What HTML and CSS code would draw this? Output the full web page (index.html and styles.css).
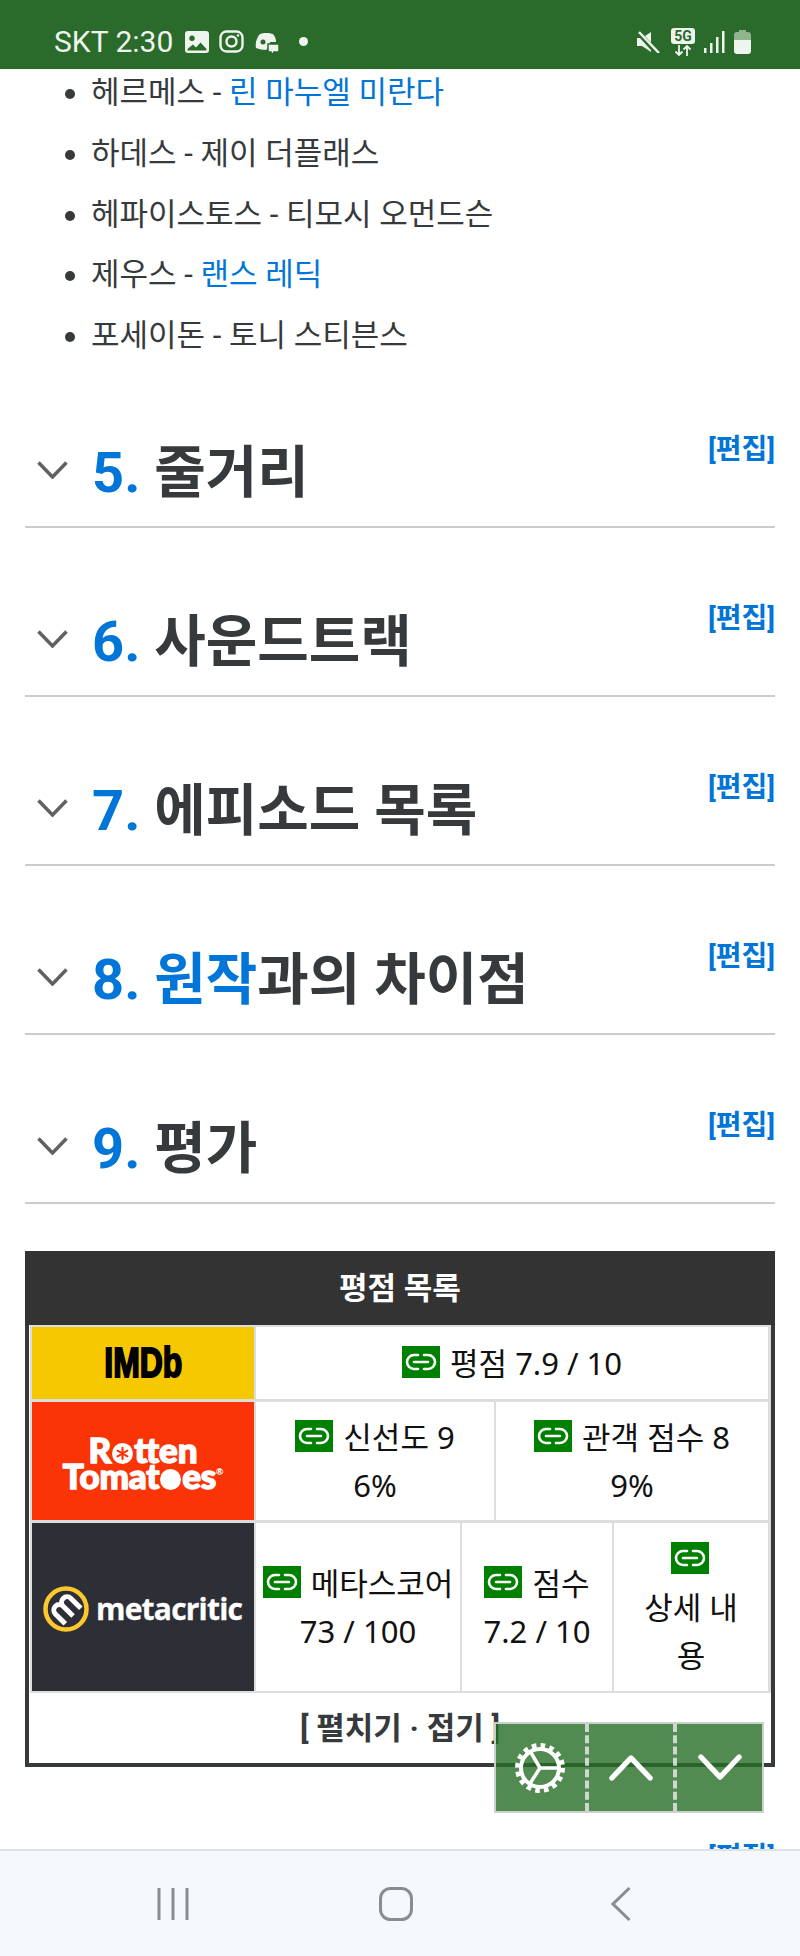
FILE: index.html
```html
<!DOCTYPE html>
<html lang="ko">
<head>
<meta charset="utf-8">
<title>평점 목록</title>
<link rel="stylesheet" href="styles.css">
</head>
<body>
<div class="phone">
  <header class="status">
    <span class="status-text">SKT 2:30</span>
    <svg class="si si-gallery" viewBox="0 0 24 22"><path fill="#eef4ee" fill-rule="evenodd" d="M3 0h18a3 3 0 0 1 3 3v16a3 3 0 0 1-3 3H3a3 3 0 0 1-3-3V3a3 3 0 0 1 3-3zM2.500 18v1a.5.5 0 0 0 .5.500h18a.5.5 0 0 0 .5-.5v-1l-6-6.500-4.500 5-3-3zM7 4.500a2.800 2.800 0 1 0 .01 0z"/></svg>
    <svg class="si si-insta" viewBox="0 0 25 23"><rect x="1.500" y="1.500" width="22" height="20" rx="6" fill="none" stroke="#eef4ee" stroke-width="2.400"/><circle cx="12.500" cy="11.500" r="5" fill="none" stroke="#eef4ee" stroke-width="2.400"/><circle cx="19" cy="5.500" r="1.300" fill="#eef4ee"/></svg>
    <svg class="si si-discord" viewBox="0 0 26 23"><path fill="#eef4ee" d="M6 2c3-1.500 10-1.500 13 0 2 2 3 5 3 8h-6v5l-2 1-2 2c-3 0-7-1-10-2-1-5 1-11 4-14z"/><circle cx="9" cy="10" r="2.500" fill="#2a6a2a"/><path fill="#eef4ee" stroke="#2a6a2a" stroke-width="1.500" d="M14 12h11v8h-5l-2 3-1-3h-3z"/></svg>
    <span class="status-dot"></span>
    <span class="status-gap"></span>
    <svg class="si si-mute" viewBox="0 0 23 22"><path fill="#eef4ee" d="M0 7h5l9-6v20l-9-6H0z"/><path stroke="#2a6a2a" stroke-width="5" d="M0 0l20 22"/><path stroke="#eef4ee" stroke-width="2.500" d="M2 1l20 21"/></svg>
    <div class="si-5g"><span class="five-g">5G</span><svg class="five-g-arrows" viewBox="0 0 20 11"><path fill="none" stroke="#eef4ee" stroke-width="1.800" d="M6 0v10M2.500 6.500L6 10l3.500-3.500M14 11V1M10.500 4.500L14 1l3.500 3.500"/></svg></div>
    <svg class="si si-signal" viewBox="0 0 21 22"><g fill="#eef4ee"><rect x="0" y="17" width="2.500" height="5"/><rect x="6" y="12" width="2.500" height="10"/><rect x="12" y="6" width="2.500" height="16"/><rect x="18" y="0" width="2.500" height="22"/></g></svg>
    <svg class="si si-battery" viewBox="0 0 17 24"><path fill="#8fb58f" d="M5 0h7v2h2a3 3 0 0 1 3 3v5H0V5a3 3 0 0 1 3-3h2z"/><path fill="#eef4ee" d="M0 10h17v11a3 3 0 0 1-3 3H3a3 3 0 0 1-3-3z"/></svg>
  </header>

  <main class="content">
    <ul class="cast">
      <li>헤르메스 - <a class="link">린 마누엘 미란다</a></li>
      <li>하데스 - 제이 더플래스</li>
      <li>헤파이스토스 - 티모시 오먼드슨</li>
      <li>제우스 - <a class="link">랜스 레딕</a></li>
      <li>포세이돈 - 토니 스티븐스</li>
    </ul>

    <section class="sec">
      <svg class="chev" viewBox="0 0 31 18"><path d="M1.500 1.500L15.500 16 29.500 1.500"/></svg>
      <h2 class="sec-title"><a class="link">5.</a> 줄거리</h2>
      <a class="edit">[편집]</a>
    </section>
    <section class="sec">
      <svg class="chev" viewBox="0 0 31 18"><path d="M1.500 1.500L15.500 16 29.500 1.500"/></svg>
      <h2 class="sec-title"><a class="link">6.</a> 사운드트랙</h2>
      <a class="edit">[편집]</a>
    </section>
    <section class="sec">
      <svg class="chev" viewBox="0 0 31 18"><path d="M1.500 1.500L15.500 16 29.500 1.500"/></svg>
      <h2 class="sec-title"><a class="link">7.</a> 에피소드 목록</h2>
      <a class="edit">[편집]</a>
    </section>
    <section class="sec">
      <svg class="chev" viewBox="0 0 31 18"><path d="M1.500 1.500L15.500 16 29.500 1.500"/></svg>
      <h2 class="sec-title"><a class="link">8.</a> <a class="link">원작</a>과의 차이점</h2>
      <a class="edit">[편집]</a>
    </section>
    <section class="sec">
      <svg class="chev" viewBox="0 0 31 18"><path d="M1.500 1.500L15.500 16 29.500 1.500"/></svg>
      <h2 class="sec-title"><a class="link">9.</a> 평가</h2>
      <a class="edit">[편집]</a>
    </section>

    <div class="ratings">
      <div class="ratings-head">평점 목록</div>
      <div class="ratings-body">
        <div class="row row-imdb">
          <div class="logo logo-imdb"><span class="imdb-text">IMDb</span></div>
          <div class="cell c-full"><div><svg class="chain" viewBox="0 0 38 32"><rect width="38" height="32" fill="#008000"/><path fill="none" stroke="#fff" stroke-width="2.600" stroke-linecap="round" d="M16 9h-4a7 7 0 0 0 0 14h4M22 9h4a7 7 0 0 1 0 14h-4M12 16h14"/></svg> 평점 7.9 / 10</div></div>
        </div>
        <div class="row row-rt">
          <div class="logo logo-rt">
            <div class="rt-line rt-one">R<svg class="rt-o" viewBox="0 0 30 30"><circle cx="15" cy="15" r="15" fill="#fff"/><g stroke="#fa320a" stroke-width="3" stroke-linecap="round"><path d="M15 7v16M8 11l14 8M8 19l14-8"/></g></svg>tten</div>
            <div class="rt-line rt-two">Tomat<svg class="rt-o rt-o2" viewBox="0 0 30 30"><circle cx="15" cy="15" r="15" fill="#fff"/></svg>es<span class="rt-reg">®</span></div>
          </div>
          <div class="cell c-half-a"><div><svg class="chain" viewBox="0 0 38 32"><rect width="38" height="32" fill="#008000"/><path fill="none" stroke="#fff" stroke-width="2.600" stroke-linecap="round" d="M16 9h-4a7 7 0 0 0 0 14h4M22 9h4a7 7 0 0 1 0 14h-4M12 16h14"/></svg> 신선도 9<br>6%</div></div>
          <div class="cell c-half-b"><div><svg class="chain" viewBox="0 0 38 32"><rect width="38" height="32" fill="#008000"/><path fill="none" stroke="#fff" stroke-width="2.600" stroke-linecap="round" d="M16 9h-4a7 7 0 0 0 0 14h4M22 9h4a7 7 0 0 1 0 14h-4M12 16h14"/></svg> 관객 점수 8<br>9%</div></div>
        </div>
        <div class="row row-mc">
          <div class="logo logo-mc">
            <svg class="mc-ring" viewBox="0 0 46 46"><circle cx="23" cy="23" r="20.500" fill="#2e2f36" stroke="#fdc82f" stroke-width="4.500"/><g transform="rotate(-45 23 23)" fill="none" stroke="#fff" stroke-width="5"><path d="M12 33V19a5 5 0 0 1 11 0v14M23 19a5 5 0 0 1 11 0v14"/></g></svg>
            <span class="mc-text">metacritic</span>
          </div>
          <div class="cell c-third-a"><div><svg class="chain" viewBox="0 0 38 32"><rect width="38" height="32" fill="#008000"/><path fill="none" stroke="#fff" stroke-width="2.600" stroke-linecap="round" d="M16 9h-4a7 7 0 0 0 0 14h4M22 9h4a7 7 0 0 1 0 14h-4M12 16h14"/></svg> 메타스코어<br>73 / 100</div></div>
          <div class="cell c-third-b"><div><svg class="chain" viewBox="0 0 38 32"><rect width="38" height="32" fill="#008000"/><path fill="none" stroke="#fff" stroke-width="2.600" stroke-linecap="round" d="M16 9h-4a7 7 0 0 0 0 14h4M22 9h4a7 7 0 0 1 0 14h-4M12 16h14"/></svg> 점수<br>7.2 / 10</div></div>
          <div class="cell c-third-c"><div><svg class="chain" viewBox="0 0 38 32"><rect width="38" height="32" fill="#008000"/><path fill="none" stroke="#fff" stroke-width="2.600" stroke-linecap="round" d="M16 9h-4a7 7 0 0 0 0 14h4M22 9h4a7 7 0 0 1 0 14h-4M12 16h14"/></svg><br>상세 내<br>용</div></div>
        </div>
      </div>
      <div class="ratings-toggle">[ 펼치기 · 접기 ]</div>
    </div>

    <section class="sec sec-last">
      <span class="sec-title">&nbsp;</span>
      <a class="edit">[편집]</a>
    </section>
  </main>

  <div class="fab">
    <button class="fab-btn"><svg class="fab-gear" viewBox="0 0 52 52"><circle cx="26" cy="26" r="19" fill="none" stroke="#fff" stroke-width="4"/><circle cx="26" cy="26" r="22.500" fill="none" stroke="#fff" stroke-width="5" stroke-dasharray="4.600 4.230"/><path fill="none" stroke="#fff" stroke-width="3.500" d="M26 26h20M26 26L16 9M26 26L15 43"/></svg></button>
    <button class="fab-btn"><svg class="fab-chev" viewBox="0 0 46 28"><path d="M3 25L23 4 43 25"/></svg></button>
    <button class="fab-btn"><svg class="fab-chev" viewBox="0 0 46 28"><path d="M3 3l20 21L43 3"/></svg></button>
  </div>

  <nav class="navbar">
    <svg class="nav-recent" viewBox="0 0 32 34"><path d="M2 1v32M16 1v32M30 1v32"/></svg>
    <svg class="nav-home" viewBox="0 0 34 34"><rect x="1.500" y="1.500" width="31" height="31" rx="10"/></svg>
    <svg class="nav-back" viewBox="0 0 20 34"><path d="M18.500 1L2 17l16.500 16"/></svg>
  </nav>
</div>
</body>
</html>
```

FILE: styles.css
```css
* { box-sizing: border-box; }
html, body { margin: 0; padding: 0; background: #fff; }
body {
  font-family: Roboto, "Noto Sans CJK KR", sans-serif;
  color: #373a3c;
}
a { color: #0275d8; text-decoration: none; }
.link { color: #0275d8; }

.phone {
  position: relative;
  width: 800px;
  height: 1956px;
  display: flex;
  flex-direction: column;
  overflow: hidden;
}

/* status bar */
.status {
  flex: 0 0 69px;
  background: #2a6a2a;
  display: flex;
  align-items: center;
  padding: 14px 49px 0 54px;
}
.status-text { font-size: 30px; color: #eef4ee; width: 131px; white-space: nowrap; }
.si { display: block; flex: none; }
.si-gallery { width: 24px; height: 22px; }
.si-insta { width: 25px; height: 23px; margin-left: 10px; }
.si-discord { width: 26px; height: 23px; margin-left: 10px; margin-top: 3px; }
.status-dot { width: 9px; height: 9px; border-radius: 50%; background: #eef4ee; margin-left: 19px; }
.status-gap { flex: 1; }
.si-mute { width: 23px; height: 22px; }
.si-5g { width: 24px; margin-left: 11px; display: flex; flex-direction: column; align-items: center; }
.five-g {
  width: 24px; height: 16px; background: #eef4ee; color: #2a6a2a; border-radius: 3px;
  font-size: 14px; font-weight: 700; line-height: 16px; text-align: center;
}
.five-g-arrows { width: 20px; height: 11px; margin-top: 1px; }
.si-signal { width: 21px; height: 22px; margin-left: 9px; }
.si-battery { width: 17px; height: 24px; margin-left: 9px; }

/* content */
.content { flex: 1; min-height: 0; overflow: hidden; }
.cast {
  list-style: disc;
  margin: -8px 0 0;
  padding: 0 0 0 91px;
  font-size: 31px;
}
.cast li { height: 60.75px; line-height: 63px; }

.sec {
  margin: 6px 25px 0;
  height: 163px;
  border-bottom: 2px solid #ccc;
  display: flex;
  align-items: flex-end;
  position: relative;
}
.cast + .sec { margin-top: 0; }
.chev {
  width: 31px; height: 18px; margin: 0 24px 47px 12px; flex: none;
  fill: none; stroke: #5f6164; stroke-width: 3.500;
}
.sec-title {
  margin: 0;
  font-size: 56px;
  font-weight: 700;
  line-height: 66px;
  padding-bottom: 20px;
  color: #373a3c;
  white-space: nowrap;
}
.edit {
  margin-left: auto;
  align-self: flex-start;
  margin-top: 65px;
  font-size: 28px;
  font-weight: 700;
  line-height: 40px;
  color: #0275d8;
  white-space: nowrap;
}

/* ratings table */
.ratings {
  margin: 47px 25px 0;
  border: 4px solid #373a3c;
  border-top: 0;
  background: #fff;
}
.ratings-head {
  height: 74px;
  margin: 0 -4px;
  background: #333;
  color: #fff;
  font-size: 31px;
  font-weight: 700;
  text-align: center;
  line-height: 76px;
}
.ratings-body {
  background: #ddd;
  padding: 2px 0 2px 2px;
  margin-left: 1px;
  display: flex;
  flex-direction: column;
  gap: 3px;
}
.row { display: flex; gap: 2px; padding-right: 2px; }
.row-imdb { height: 72px; }
.row-rt { height: 118px; }
.row-mc { height: 168px; }
.logo { flex: 0 0 222px; display: flex; align-items: center; justify-content: center; }
.cell {
  background: #fff;
  color: #111;
  font-family: "Noto Sans", "Noto Sans CJK KR", sans-serif;
  font-size: 31px;
  line-height: 48px;
  text-align: center;
  display: flex;
  align-items: center;
  justify-content: center;
  white-space: nowrap;
}
.c-full { flex: 0 0 512px; }
.c-half-a { flex: 0 0 238px; }
.c-half-b { flex: 0 0 272px; }
.c-third-a { flex: 0 0 204px; }
.c-third-b { flex: 0 0 150px; }
.c-third-c { flex: 0 0 154px; }
.chain { width: 38px; height: 32px; vertical-align: -3px; margin-right: 2px; }

.logo-imdb { background: #f6c800; }
.imdb-text {
  font-family: "Liberation Sans", sans-serif;
  font-weight: 700;
  font-size: 42px;
  color: #000;
  display: inline-block;
  transform: scaleX(.76);
  -webkit-text-stroke: 2px #000;
}
.logo-rt { background: #fb3407; flex-direction: column; }
.rt-line {
  font-family: Lato, Roboto, sans-serif;
  font-weight: 900;
  color: #fff;
  white-space: nowrap;
  -webkit-text-stroke: 1.400px #fff;
}
.rt-one { font-size: 35px; height: 23px; line-height: 23px; }
.rt-two { font-size: 35px; height: 22px; line-height: 22px; letter-spacing: -.2px; }
.rt-o { width: 21px; height: 21px; vertical-align: -1px; margin: 0 1px; }
.rt-o2 { width: 21px; height: 21px; }
.rt-reg { font-size: 9px; vertical-align: 14px; -webkit-text-stroke: 0; }
.logo-mc { background: #2e2f36; gap: 7px; padding: 4px 0 0 11px; justify-content: flex-start; }
.mc-ring { width: 46px; height: 46px; flex: none; }
.mc-text {
  font-family: "Open Sans", sans-serif;
  font-weight: 700;
  font-size: 30px;
  color: #fff;
  letter-spacing: -.8px;
  -webkit-text-stroke: .3px #fff;
}
.ratings-toggle {
  height: 70px;
  font-size: 31px;
  font-weight: 700;
  color: #373a3c;
  text-align: center;
  line-height: 72px;
}

.sec-last { border-bottom: 0; }

/* floating buttons */
.fab {
  position: absolute;
  left: 494px;
  top: 1722px;
  width: 270px;
  height: 91px;
  display: flex;
  background: rgba(38, 110, 38, .8);
  border: 2px solid rgba(222, 222, 222, .85);
}
.fab-btn {
  flex: 0 0 33.333%;
  padding: 0;
  border: 0;
  background: none;
  display: flex;
  align-items: center;
  justify-content: center;
}
.fab-btn + .fab-btn { border-left: 4px dashed rgba(222, 222, 222, .9); }
.fab-gear { width: 52px; height: 52px; }
.fab-chev { width: 44px; height: 27px; fill: none; stroke: #fff; stroke-width: 5.500; stroke-linecap: round; stroke-linejoin: round; }

/* navigation bar */
.navbar {
  flex: 0 0 107px;
  background: #f5f9fe;
  border-top: 2px solid #dde2e6;
  display: flex;
  align-items: flex-start;
  padding: 36px 0 0 157px;
  position: relative;
}
.navbar svg { fill: none; stroke: #8a8d90; stroke-width: 3; display: block; flex: none; }
.nav-recent { width: 32px; height: 34px; }
.nav-home { width: 34px; height: 34px; margin-left: 190px; }
.nav-back { width: 20px; height: 34px; margin-left: 198px; }
```
